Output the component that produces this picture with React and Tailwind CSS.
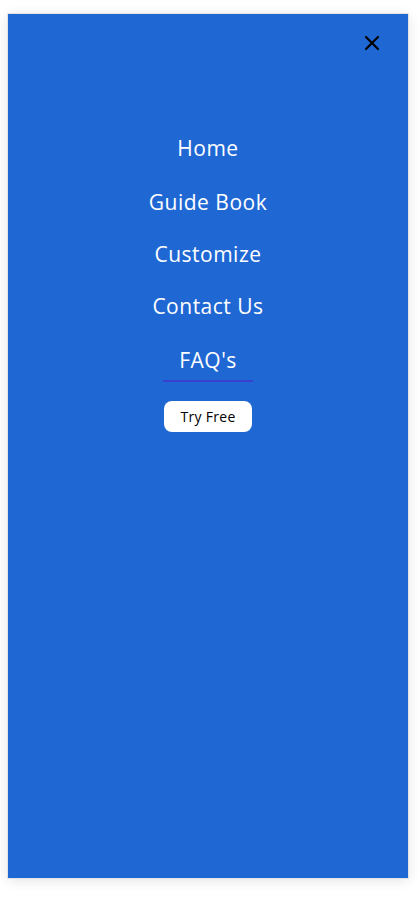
import { X } from "lucide-react";

const links = [
  { label: "Home", cls: "" },
  { label: "Guide Book", cls: "mt-[2px]" },
  { label: "Customize", cls: "" },
  { label: "Contact Us", cls: "" },
];

export default function App() {
  return (
    <div className="min-h-screen bg-white pt-[14px] pl-2" style={{ fontFamily: "'Open Sans', sans-serif" }}>
      <div className="relative w-[400px] h-[864px] bg-[#1f68d4] shadow-[0_2px_12px_rgba(0,0,0,0.12)] outline outline-1 outline-[#e4e4e4]">
        <button className="absolute right-[24px] top-[17px] text-black">
          <X size={24} strokeWidth={2.2} />
        </button>
        <nav className="flex flex-col items-center pt-[108px] text-white">
          {links.map((l) => (
            <a key={l.label} className={`block py-[11px] text-[21px] leading-[30px] tracking-[0.5px] ${l.cls}`}>
              {l.label}
            </a>
          ))}
          <a className="block mt-[2px] pt-[11px] pb-[5px] text-[21px] leading-[30px] tracking-[0.5px] border-b-2 border-[#3a3fd0] w-[90px] text-center">
            FAQ's
          </a>
          <button className="mt-[19px] w-[88px] h-[31px] rounded-lg bg-white text-black text-[14px] tracking-[0.3px]">
            Try Free
          </button>
        </nav>
      </div>
    </div>
  );
}
